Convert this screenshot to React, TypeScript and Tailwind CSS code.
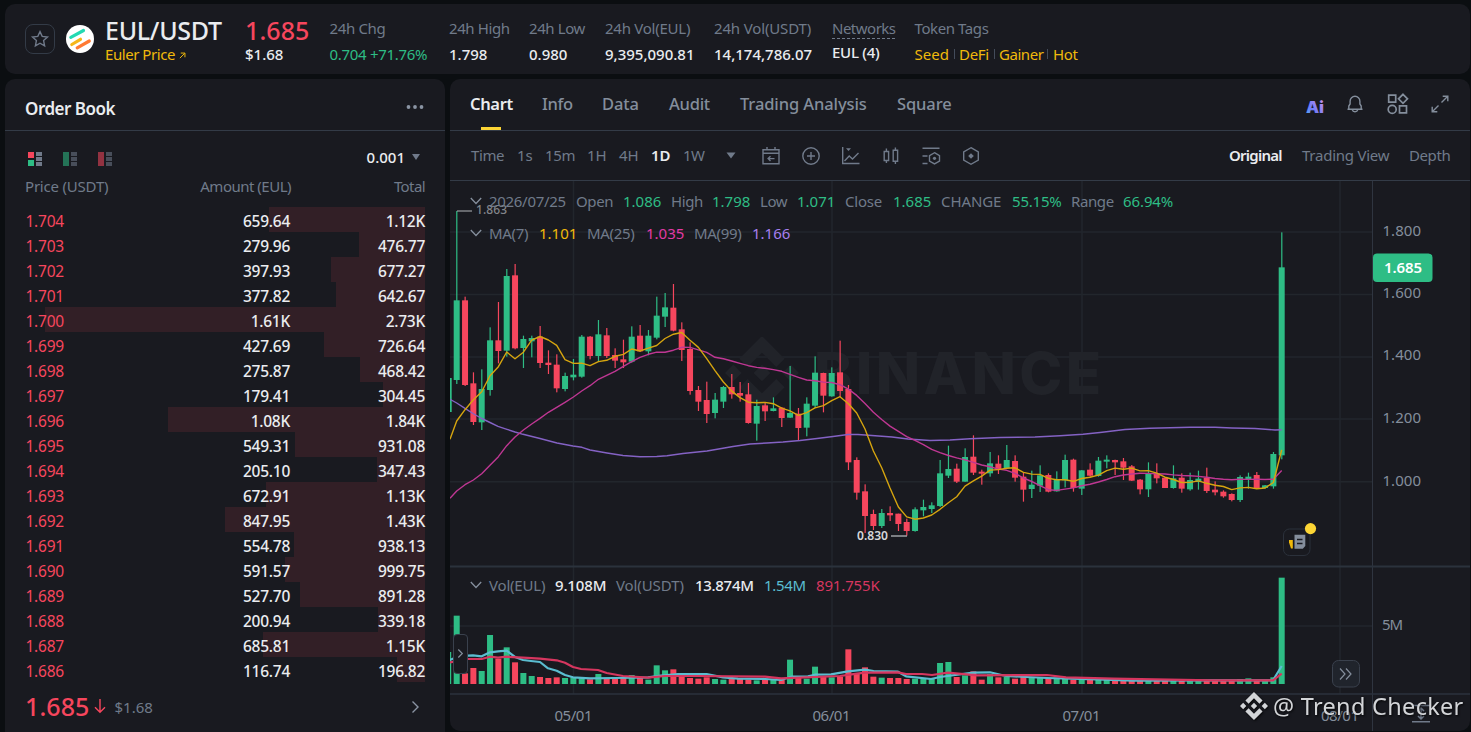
import type { ReactNode } from "react";
import { SiBinance } from "react-icons/si";

type Candle = [number, number, number, number, number];

const STEP = 25 / 3;
const FIRST_X = 456.7;
const GREEN = "#2ebd85";
const RED = "#f6465d";

/* Each candle: high, body top, body bottom, low, rising (1) or falling (0); thirds of a pixel. */
const GROUPS: { dy: number; rows: Candle[] }[] = [
  {
    dy: 190,
    rows: [
      [63, 331, 570, 582, 1], [320, 331, 585, 588, 0], [547, 580, 696, 705, 0], [538, 597, 697, 720, 1],
      [412, 451, 600, 617, 1], [336, 451, 483, 520, 0], [237, 258, 482, 500, 1], [222, 256, 475, 478, 0],
      [437, 447, 474, 534, 1], [437, 444, 454, 502, 1], [408, 440, 519, 534, 0], [481, 518, 525, 552, 0],
      [493, 524, 595, 607, 0], [548, 558, 597, 604, 1], [507, 554, 562, 571, 1], [435, 440, 560, 563, 1],
      [438, 440, 498, 508, 0], [390, 433, 498, 515, 1], [414, 436, 498, 504, 0], [475, 495, 512, 534, 0],
      [449, 508, 517, 534, 0], [409, 440, 515, 518, 1], [405, 437, 484, 486, 0], [420, 437, 484, 496, 1],
    ],
  },
  {
    dy: 270,
    rows: [
      [80, 137, 203, 208, 1], [69, 112, 140, 171, 1], [42, 113, 182, 184, 0], [157, 178, 240, 273, 0],
      [217, 237, 363, 374, 0], [348, 360, 395, 423, 0], [335, 390, 432, 459, 0], [369, 389, 429, 445, 1],
      [348, 351, 395, 414, 1], [312, 351, 373, 386, 0], [336, 369, 377, 395, 0], [339, 373, 459, 461, 0],
      [389, 408, 461, 512, 1], [397, 406, 424, 453, 0], [382, 415, 423, 424, 1], [411, 413, 444, 471, 0],
      [288, 429, 443, 444, 1], [414, 431, 474, 511, 0], [382, 401, 473, 499, 1], [259, 308, 407, 414, 1],
      [308, 309, 377, 427, 0], [292, 309, 379, 380, 1], [212, 307, 363, 381, 0], [345, 357, 577, 600, 0],
      [562, 570, 668, 689, 0],
    ],
  },
  {
    dy: 330,
    rows: [
      [463, 484, 558, 609, 0], [539, 552, 588, 600, 0], [537, 549, 588, 594, 1], [529, 549, 556, 573, 0],
      [551, 551, 582, 603, 0], [566, 576, 603, 617, 0], [532, 538, 603, 605, 1], [509, 531, 541, 559, 1],
      [517, 526, 537, 549, 1], [390, 430, 528, 531, 1], [347, 417, 437, 444, 1], [401, 416, 455, 459, 0],
      [355, 381, 455, 455, 1], [316, 380, 428, 435, 0], [419, 425, 431, 464, 0], [366, 400, 430, 440, 1],
      [376, 401, 420, 432, 0], [345, 390, 414, 416, 1], [376, 393, 443, 455, 0], [428, 440, 479, 515, 0],
      [422, 464, 477, 504, 1], [406, 436, 467, 486, 1], [430, 435, 485, 487, 0], [424, 449, 484, 485, 1],
      [374, 390, 451, 472, 1],
    ],
  },
  {
    dy: 220,
    rows: [
      [716, 719, 804, 815, 0], [750, 751, 806, 825, 1], [730, 749, 767, 770, 0], [711, 722, 768, 770, 1],
      [706, 719, 725, 745, 1], [719, 720, 727, 765, 0], [714, 724, 743, 780, 0], [735, 739, 782, 783, 0],
      [777, 779, 808, 823, 0], [727, 762, 808, 831, 1], [730, 760, 775, 790, 0], [772, 773, 804, 804, 0],
      [736, 775, 804, 806, 1], [760, 773, 806, 818, 0], [758, 780, 808, 812, 1], [752, 776, 786, 809, 1],
      [743, 773, 813, 819, 0], [784, 809, 817, 826, 0], [811, 815, 829, 833, 0], [820, 822, 840, 844, 0],
      [766, 771, 840, 846, 1], [758, 770, 777, 806, 1], [756, 765, 804, 806, 0], [795, 796, 804, 806, 1],
      [696, 702, 799, 806, 1], [37, 142, 706, 718, 1],
    ],
  },
];

const candles = GROUPS.flatMap(({ dy, rows }) =>
  rows.map(([h, t, b, l, up]) => ({ h: h / 3 + dy, t: t / 3 + dy, b: b / 3 + dy, l: l / 3 + dy, up: up === 1 })),
).map((c, i) => ({ ...c, x: FIRST_X + i * STEP }));

const closes = candles.map((c) => (c.up ? c.t : c.b));

function average(period: number) {
  const out: [number, number][] = [];
  for (let i = period - 1; i < closes.length; i++) {
    const slice = closes.slice(i - period + 1, i + 1);
    out.push([candles[i].x, slice.reduce((a, b) => a + b, 0) / period]);
  }
  return out;
}

const points = (list: [number, number][]) => list.map(([x, y]) => `${x.toFixed(1)},${y.toFixed(1)}`).join(" ");
const lead = (list: number[]): [number, number][] =>
  list.map((y, i) => [i === 0 ? 450 : FIRST_X + (i - 1) * STEP, y / 3 + 190]);

const ma7 = [...lead([748, 693, 659, 629, 605, 557, 530]), ...average(7)];
const ma25 = [
  ...lead([925, 903, 884, 870, 851, 826, 800, 767, 741, 720, 702, 685, 667, 652, 637, 621, 603, 587, 568, 556, 544, 529, 515, 502, 493]),
  ...average(25),
];
const ma99: [number, number][] = [
  [450, 399.3], [456.7, 403], [465, 408.3], [473, 413.5], [481.7, 418.5], [490, 422.5], [498, 426.3], [507, 429.3],
  [515, 432], [523, 434.3], [540, 438.5], [557, 443], [573, 446], [582, 447.3], [590, 450], [607, 453], [623, 455.5],
  [640, 456.8], [656.7, 456.5], [667, 455.7], [683, 453.5], [707, 451], [733, 446.5], [750, 444], [767, 443],
  [783, 442], [800, 440.5], [817, 438.5], [833, 436.5], [848, 434.5], [858, 434.5], [865, 435], [892, 437],
  [908, 439], [930, 440.5], [950, 440], [970, 438.7], [1000, 437.5], [1035, 437], [1060, 435.7], [1083, 434.3],
  [1100, 432.5], [1125, 429.5], [1150, 428.3], [1190, 427.3], [1215, 427.3], [1232, 428], [1255, 428.5],
  [1275, 430], [1281.7, 429.7],
];

/* Bar tops of the volume pane, thirds of a pixel from its upper edge. */
const volumes = [
  167, 340, 324, 333, 225, 296, 262, 307, 339, 348, 351, 354, 352, 354, 352, 355, 358, 342, 356, 355,
  354, 345, 354, 359, 316, 331, 328, 345, 354, 356, 352, 357, 359, 357, 357, 359, 361, 360, 360, 360,
  299, 350, 356, 320, 350, 352, 350, 268, 341, 322, 350, 353, 354, 354, 357, 356, 354, 354, 309, 306,
  351, 346, 334, 359, 342, 352, 350, 356, 351, 352, 354, 355, 357, 357, 359, 358, 360, 359, 360, 361,
  361, 361, 361, 360, 361, 361, 360, 361, 360, 360, 361, 361, 361, 361, 357, 355, 361, 360, 352, 53,
];
const volFast: [number, number][] = [
  [448, 302], [454, 295], [468, 287], [473, 286], [481.7, 289], [490, 277], [498, 274], [506.7, 272], [515, 291],
  [523, 300], [531, 303], [540, 306], [548, 325], [556.7, 332], [565, 345], [573, 352], [590, 355], [615, 354],
  [648, 352], [661, 347], [678, 342], [706.7, 342], [723, 352], [738, 356], [765, 357], [781, 360], [791, 350],
  [808, 349], [815, 344], [831, 343], [848, 334], [865, 329], [873.6, 333], [898, 335], [906, 349], [931, 357],
  [940, 351], [973, 338], [990, 337], [1006, 348], [1047, 354], [1105, 359], [1133, 362], [1211, 361], [1273, 361],
  [1281.7, 318],
];
const volSlow: [number, number][] = [
  [448, 308], [468, 297], [481.7, 297], [490, 290], [498, 293], [506.7, 290], [523, 293], [540, 296], [556.7, 301],
  [565, 308], [573, 321], [581, 327], [598, 330], [606.7, 339], [623, 348], [648, 353], [665, 348], [698, 348],
  [765, 350], [781, 355], [840, 348], [857, 341], [865, 338], [898, 337], [906, 342], [922, 342], [932, 345],
  [948, 338], [977, 346], [1047, 345], [1066, 352], [1113, 356], [1211, 361], [1273, 361], [1281.7, 341],
];
const volPoints = (list: [number, number][]) => points(list.map(([x, y]) => [x, y / 3 + 560]));

const book: [string, string, string, number][] = [
  ["1.704", "659.64", "1.12K", 156], ["1.703", "279.96", "476.77", 66], ["1.702", "397.93", "677.27", 94],
  ["1.701", "377.82", "642.67", 89], ["1.700", "1.61K", "2.73K", 380], ["1.699", "427.69", "726.64", 101],
  ["1.698", "275.87", "468.42", 65], ["1.697", "179.41", "304.45", 42], ["1.696", "1.08K", "1.84K", 257],
  ["1.695", "549.31", "931.08", 130], ["1.694", "205.10", "347.43", 48], ["1.693", "672.91", "1.13K", 159],
  ["1.692", "847.95", "1.43K", 200], ["1.691", "554.78", "938.13", 131], ["1.690", "591.57", "999.75", 140],
  ["1.689", "527.70", "891.28", 125], ["1.688", "200.94", "339.18", 47], ["1.687", "685.81", "1.15K", 162],
  ["1.686", "116.74", "196.82", 28],
];

function Glyph({ className, children }: { className: string; children: ReactNode }) {
  return (
    <svg viewBox="0 0 20 20" fill="none" stroke="currentColor" strokeWidth="1.4" className={className}>
      {children}
    </svg>
  );
}

function Stat({ label, value, className, tone }: { label: string; value: string; className: string; tone: string }) {
  return (
    <div className={`flex flex-col gap-1.5 ${className}`}>
      <span className="text-[#707a8a]">{label}</span>
      <span className={tone}>{value}</span>
    </div>
  );
}

function Header() {
  return (
    <header className="ml-[5px] mr-px flex h-[70px] rounded-[10px] bg-[#191a20] pl-5 pt-3.5 whitespace-nowrap">
      <div className="mt-1.5 flex size-[30px] items-center justify-center rounded-lg border border-[#333b47] text-[#707a8a]">
        <Glyph className="size-5">
          <path d="M10 2.6l2.2 4.8 5.3.6-3.9 3.6 1 5.2-4.6-2.6-4.6 2.6 1-5.2L2.500 8l5.300-.6z" />
        </Glyph>
      </div>
      <svg viewBox="0 0 28 28" className="ml-[11px] mt-[7px] size-7" strokeWidth="3.2" strokeLinecap="round">
        <circle cx="14" cy="14" r="14" fill="#fff" />
        <path d="M4.800 12.300L17.500 5.500" stroke="#23d9b2" />
        <path d="M5.800 19.500L14.500 14.300" stroke="#f5b61a" />
        <path d="M11.200 22.800L23.300 16" stroke="#ff7a33" />
      </svg>
      <div className="ml-[11px] flex w-[140px] flex-col">
        <h1 className="h-6 text-[25px] leading-6 font-medium tracking-[-0.3px]">EUL/USDT</h1>
        <div className="mt-0.5 flex items-center gap-1 text-[#f0b90b]">
          <span className="tracking-[-0.45px]">Euler Price</span>
          <svg viewBox="0 0 8 8" className="mt-0.5 size-[7px]" fill="none" stroke="currentColor" strokeWidth="1.1">
            <path d="M1 7L6.500 1.500M2 1.200h4.800V6" />
          </svg>
        </div>
      </div>
      <div className="flex w-[84.500px] flex-col">
        <span className="h-6 text-[25px] leading-6 font-medium tracking-[0.1px] text-[#f6465d]">1.685</span>
        <span className="mt-0.5 font-medium">$1.68</span>
      </div>
      <div className="flex">
        <Stat label="24h Chg" value="0.704 +71.76%" className="w-[119.500px] tracking-[-0.35px]" tone="text-[#2ebd85] tracking-[-0.3px]" />
        <Stat label="24h High" value="1.798" className="w-20 tracking-[-0.4px]" tone="font-medium tracking-normal" />
        <Stat label="24h Low" value="0.980" className="w-[76px] tracking-[-0.4px]" tone="font-medium tracking-normal" />
        <Stat label="24h Vol(EUL)" value="9,395,090.81" className="w-[109px] tracking-[-0.25px]" tone="font-medium tracking-normal" />
        <Stat label="24h Vol(USDT)" value="14,174,786.07" className="w-[118px] tracking-[-0.15px]" tone="font-medium tracking-normal" />
        <div className="w-[82.500px]">
          <span className="block h-[21px] w-[63px] border-b border-dashed border-[#707a8a] tracking-[-0.5px] text-[#707a8a]">
            Networks
          </span>
          <span className="mt-[3px] block font-medium tracking-[-0.25px]">EUL (4)</span>
        </div>
        <div className="flex flex-col gap-1.5">
          <span className="tracking-[-0.4px] text-[#707a8a]">Token Tags</span>
          <div className="flex items-center text-[#f0b90b]">
            <span className="w-[39.500px]">Seed</span>
            <i className="mr-1 h-2.5 w-px bg-[#434c5a]" />
            <span className="w-[35px] tracking-[-0.3px]">DeFi</span>
            <i className="mr-1 h-2.5 w-px bg-[#434c5a]" />
            <span className="w-[48px] tracking-[-0.45px]">Gainer</span>
            <i className="mr-[5px] h-2.5 w-px bg-[#434c5a]" />
            <span className="tracking-[-0.4px]">Hot</span>
          </div>
        </div>
      </div>
    </header>
  );
}

function ViewIcon({ top, bottom, dim }: { top: string; bottom: string; dim?: boolean }) {
  return (
    <svg viewBox="0 0 14 14" className="size-3.5" opacity={dim ? 0.55 : 1} shapeRendering="crispEdges">
      <rect x="0" y="0" width="6" height={dim ? 14 : 6} fill={top} />
      <rect x="0" y="8" width="6" height="6" fill={bottom} />
      <rect x="8" y="0" width="6" height="4" fill="#707a8a" />
      <rect x="8" y="5" width="6" height="4" fill="#707a8a" />
      <rect x="8" y="10" width="6" height="4" fill="#707a8a" />
    </svg>
  );
}

function OrderBook() {
  return (
    <section className="flex w-[440px] flex-col rounded-t-[10px] bg-[#191a20]">
      <div className="flex h-[52px] items-center justify-between border-b border-[#333b47] pt-1.5 pr-[21px] pl-5">
        <h2 className="translate-y-px text-[17px] font-semibold tracking-[-0.5px]">Order Book</h2>
        <svg viewBox="0 0 18 4" className="h-1 w-[18px] -translate-y-px" fill="#8a94a3">
          <circle cx="2.500" cy="2" r="1.900" />
          <circle cx="9" cy="2" r="1.900" />
          <circle cx="15.500" cy="2" r="1.900" />
        </svg>
      </div>
      <div className="mt-4 flex h-5 items-center pr-[25px] pl-[23px]">
        <div className="mt-1 flex gap-[21px]">
          <ViewIcon top={RED} bottom={GREEN} />
          <ViewIcon top={GREEN} bottom={GREEN} dim />
          <ViewIcon top={RED} bottom={RED} dim />
        </div>
        <span className="ml-auto font-medium">0.001</span>
        <svg viewBox="0 0 8 6" className="ml-[7px] h-1.5 w-2" fill="#707a8a"><path d="M0 0h8L4 6z" /></svg>
      </div>
      <div className="mx-5 mt-[9px] flex text-[#707a8a]">
        <span className="w-[134px] tracking-[-0.2px]">Price (USDT)</span>
        <span className="w-[132px] text-right tracking-[-0.5px]">Amount (EUL)</span>
        <span className="flex-1 text-right tracking-[-0.6px]">Total</span>
      </div>
      <ul className="mt-[11px] flex flex-col">
        {book.map(([price, amount, total, depth]) => (
          <li
            key={price}
            className="mx-5 flex h-[25px] items-center bg-right bg-no-repeat pt-0.5 text-[15.500px] font-medium tracking-[-0.25px]"
            style={{
              backgroundImage: "linear-gradient(#321f26, #321f26)",
              backgroundSize: `${depth}px 100%`,
            }}
          >
            <span className="w-[134px] pl-[0.500px] font-normal text-[#f6465d]">{price}</span>
            <span className="w-[131px] text-right">{amount}</span>
            <span className="flex-1 text-right">{total}</span>
          </li>
        ))}
      </ul>
      <div className="mt-2 flex h-8 items-center pr-[26px] pl-5">
        <span className="text-[25px] font-medium tracking-[0.1px] text-[#f6465d]">1.685</span>
        <svg viewBox="0 0 12 16" className="ml-1 h-4 w-3" fill="none" stroke="#f6465d" strokeWidth="1.4">
          <path d="M6 1v13M1 9.200l5 5 5-5" />
        </svg>
        <span className="ml-[9px] pt-0.5 text-[#707a8a]">$1.68</span>
        <svg viewBox="0 0 8 14" className="mt-0.5 ml-auto h-[14px] w-2" fill="none" stroke="#8a94a3" strokeWidth="1.4">
          <path d="M1.500 1.500L7 7l-5.500 5.500" />
        </svg>
      </div>
    </section>
  );
}

function Tabs() {
  return (
    <nav className="flex h-[52px] shrink-0 border-b border-[#333b47] pl-5 whitespace-nowrap">
      <div className="flex gap-[30px] pt-[13px] text-[16.500px] leading-6 font-medium tracking-[-0.1px] text-[#848e9c]">
        <span className="relative w-[42px] font-semibold tracking-[-0.35px] text-[#eaecef]">
          Chart
          <i className="absolute top-[35px] left-[11px] h-[3px] w-5 bg-[#fcd535]" />
        </span>
        <span className="w-[30px] tracking-[-0.4px]">Info</span>
        <span className="w-[37px]">Data</span>
        <span className="w-[41px] tracking-[-0.25px]">Audit</span>
        <span className="w-[127px]">Trading Analysis</span>
        <span>Square</span>
      </div>
      <div className="ml-auto flex items-center pr-5 text-[#848e9c]">
        <svg viewBox="0 0 20 20" className="mt-1 mr-5 size-5">
          <defs>
            <linearGradient id="ai" x1="0" y1="1" x2="1" y2="0">
              <stop offset="0" stopColor="#4fb8f0" />
              <stop offset="0.35" stopColor="#6f7bf7" />
              <stop offset="0.8" stopColor="#b58cf2" />
              <stop offset="1" stopColor="#f0a5c8" />
            </linearGradient>
          </defs>
          <text x="1" y="16" fontSize="16" fontWeight="900" fontFamily="Inter" textLength="18" lengthAdjust="spacingAndGlyphs" fill="url(#ai)">
            Ai
          </text>
        </svg>
        <Glyph className="-mt-0.5 mr-[22px] size-5">
          <path d="M2.500 15.200h15M3.800 15.200V12l1.300-2V7.200a4.900 4.900 0 0 1 9.800 0V10l1.300 2v3.200M7.200 15.600a2.900 2.900 0 0 0 5.600 0" />
        </Glyph>
        <svg viewBox="0 0 22 22" className="-mt-px mr-[21px] size-[22px]" fill="none" stroke="currentColor" strokeWidth="1.700">
          <path d="M1.700 2.200h7v7h-7zM12.500 12.900h7v7h-7zM16 1.300l4.500 4.500-4.500 4.500-4.500-4.500z" />
          <circle cx="5.200" cy="16.400" r="4" />
        </svg>
        <Glyph className="-mt-px size-5">
          <path d="M11.500 8.500L17.500 2.500M12.700 2.200h5.100v5.100M8.500 11.500L2.500 17.500M2.200 12.700v5.100h5.100" />
        </Glyph>
      </div>
    </nav>
  );
}

function Toolbar() {
  return (
    <div className="flex h-[50px] shrink-0 items-center border-b border-[#333b47] pr-5 pl-[21px] whitespace-nowrap text-[#707a8a]">
      <div className="flex -translate-y-px items-center">
        <span className="w-[46px] tracking-[-0.4px]">Time</span>
        <span className="w-[28px]">1s</span>
        <span className="w-[42px] tracking-[-0.3px]">15m</span>
        <span className="w-8">1H</span>
        <span className="w-8">4H</span>
        <span className="w-8 font-semibold text-[#eaecef]">1D</span>
        <span className="w-[43px] tracking-[-0.5px]">1W</span>
      </div>
      <svg viewBox="0 0 10 7" className="h-[7px] w-2.5" fill="currentColor"><path d="M0.500 0.500h9L5 6.500z" /></svg>
      <div className="ml-[25px] flex gap-5">
        <Glyph className="size-5">
          <path d="M2 3.700h16v14H2zM2 7.200h16M6 1v2.700M14 1v2.700M13.500 12.600h-6M9.500 10.200l-2.400 2.400L9.500 15" />
        </Glyph>
        <Glyph className="size-5">
          <circle cx="10" cy="10" r="8.200" />
          <path d="M10 6v8M6 10h8" />
        </Glyph>
        <Glyph className="size-5">
          <path d="M1.700 1v16.500H18.500M3.500 15l4.700-5 3.300 3 6-6" />
          <path d="M5 2.200h5L7.500 5z" fill="currentColor" stroke="none" />
        </Glyph>
        <Glyph className="size-5">
          <path d="M3.200 5.500h4.400v9H3.200zM12.200 4.200h4.400v11h-4.400zM5.400 2.500v3M5.400 14.500v2.500M14.400 1.500v2.700M14.400 15.200v2.700" />
        </Glyph>
        <Glyph className="size-5">
          <path d="M1.500 2.200h17M1.500 10h5M1.500 17.500h5M13.500 6.700l5 2.900v5.400l-5 2.900-5-2.900V9.600z" />
          <circle cx="13.500" cy="12.300" r="1.600" fill="currentColor" stroke="none" />
        </Glyph>
        <Glyph className="size-5">
          <path d="M10 1.700l7.300 4.200v8.200L10 18.300l-7.300-4.200V5.900z" />
          <path d="M10 7.200l2.800 2.800-2.800 2.800L7.200 10z" fill="currentColor" stroke="none" />
        </Glyph>
      </div>
      <div className="ml-auto flex -translate-y-px">
        <span className="w-[73px] font-semibold tracking-[-0.75px] text-[#eaecef]">Original</span>
        <span className="w-[107px] tracking-[-0.25px]">Trading View</span>
        <span className="w-[41px] tracking-[-0.4px]">Depth</span>
      </div>
    </div>
  );
}

function Chevron() {
  return (
    <svg viewBox="0 0 12 8" className="mr-[7px] h-2 w-3 shrink-0" fill="none" stroke="#848e9c" strokeWidth="1.300">
      <path d="M0.800 1L6 6.500 11.200 1" />
    </svg>
  );
}

function Legend({ className, items }: { className: string; items: [string, string][] }) {
  return (
    <div className={`absolute left-5 flex h-5 items-center whitespace-nowrap text-[#707a8a] ${className}`}>
      <Chevron />
      {items.map(([text, style]) => (
        <span key={text} className={style}>{text}</span>
      ))}
    </div>
  );
}

function Plot() {
  return (
    <svg viewBox="450 181 1020 550" className="block h-[550px] w-full" fontFamily="Noto Sans, sans-serif">
      <g stroke="#22262c" strokeWidth="1.500">
        {[232, 294.5, 357, 419, 481.700, 626].map((y) => <path key={y} d={`M450 ${y}H1372`} />)}
        {[573.500, 832, 1082, 1340].map((x) => <path key={x} d={`M${x} 181V694`} />)}
      </g>
      <g fill="#212329">
        <SiBinance x={725} y={336} fill="#212329" className="size-[74px]" />
        <text x="814" y="394" fontSize="58" fontWeight="800" fontFamily="Inter" textLength="287">BINANCE</text>
      </g>
      <path d="M1372.500 181V731" stroke="#2f3540" />
      <path d="M450 566.500H1470" stroke="#2b323c" strokeWidth="2" />
      <path d="M450 694H1470" stroke="#2b323c" strokeWidth="1.500" />

      <rect x="450" y="378" width="1.700" height="34" fill={GREEN} />
      {candles.map((c) => (
        <g key={c.x} fill={c.up ? GREEN : RED}>
          <rect x={c.x - 0.500} y={c.h} width="1.200" height={c.l - c.h} />
          <rect x={c.x - 3} y={c.t} width="6" height={Math.max(1, c.b - c.t)} />
        </g>
      ))}
      <g fill="none" strokeWidth="1.400" strokeLinejoin="round">
        <polyline points={points(ma99)} stroke="#8462c4" />
        <polyline points={points(ma25)} stroke="#bf3793" />
        <polyline points={points(ma7)} stroke="#d6a50f" />
      </g>

      <rect x="450" y="652" width="1.200" height="32" fill={GREEN} />
      {candles.map((c, i) => (
        <rect key={c.x} x={c.x - 3} y={volumes[i] / 3 + 560} width="6" height={124 - volumes[i] / 3} fill={c.up ? GREEN : RED} />
      ))}
      <g fill="none" strokeWidth="2.200" strokeLinejoin="round">
        <polyline points={volPoints(volFast)} stroke="#5bbdd0" />
        <polyline points={volPoints(volSlow)} stroke="#d6365f" />
      </g>

      <path d="M457 211H472" stroke="#b4b6ba" />
      <text x="476" y="214" fontSize="12" fontWeight="500" fill="#84868b" textLength="31">1.863</text>
      <path d="M891 536H907" stroke="#b4b6ba" strokeWidth="1.300" />
      <text x="857" y="540" fontSize="13" fontWeight="600" fill="#d5d7da" textLength="31" lengthAdjust="spacingAndGlyphs">0.830</text>

      <g fill="#848e9c" fontSize="15">
        <text x="1382.500" y="236" textLength="38.500">1.800</text>
        <text x="1382.500" y="298" textLength="38.500">1.600</text>
        <text x="1382.500" y="360" textLength="38.500">1.400</text>
        <text x="1382.500" y="423" textLength="38.500">1.200</text>
        <text x="1382.500" y="485.500" textLength="38.500">1.000</text>
        <text x="1382" y="630" textLength="21">5M</text>
        <g textAnchor="middle">
          <text x="573.500" y="720.500" textLength="38">05/01</text>
          <text x="831.500" y="720.500" textLength="38">06/01</text>
          <text x="1081.500" y="720.500" textLength="38">07/01</text>
          <text x="1340" y="720.500" textLength="38">08/01</text>
        </g>
      </g>
      <rect x="1373" y="253.500" width="59.500" height="28.500" rx="4" fill={GREEN} />
      <text x="1384" y="273" fontSize="15" fontWeight="600" fill="#fff" textLength="38">1.685</text>

      <rect x="453.500" y="634.500" width="14" height="39" rx="3.500" fill="#191a20" stroke="#3a414d" />
      <path d="M458.300 649.500l4 4-4 4" fill="none" stroke="#848e9c" strokeWidth="1.200" />
      <rect x="1332.500" y="660.500" width="27" height="26.500" rx="6" fill="#20242c" stroke="#3a414d" />
      <path d="M1340 668.500l5 5.500-5 5.500M1346 668.500l5 5.500-5 5.500" fill="none" stroke="#848e9c" strokeWidth="1.200" />

      <rect x="1283.500" y="529" width="26.500" height="26.500" rx="6" fill="#191a20" stroke="#2b313b" />
      <path d="M1289 540h3.800v8.500h-1.800L1289 542.500z" fill="#f0b90b" />
      <path d="M1294.500 534.800h10.800v11.200l-2.500 2.800h-8.300z" fill="#848e9c" />
      <path d="M1297 539.500h5.500M1297 543.500h5.500" stroke="#191a20" strokeWidth="1.700" />
      <circle cx="1310.500" cy="528.600" r="5.600" fill="#fcd535" />

      <path d="M1412 705.500h18M1412 721.700h18M1421 708v11M1418 711l3-3 3 3M1418 716l3 3 3-3" fill="none" stroke="#707a8a" strokeWidth="1.500" />
    </svg>
  );
}

function ChartPanel() {
  return (
    <section className="mr-px mb-px flex flex-1 flex-col overflow-hidden rounded-[10px] bg-[#191a20]">
      <Tabs />
      <Toolbar />
      <div className="relative">
        <Plot />
        <Legend
          className="top-[10px]"
          items={[
            ["2026/07/25", "w-[87px] tracking-[-0.3px]"],
            ["Open", "w-[47px] tracking-[-0.4px]"],
            ["1.086", "w-[48px] text-[#2ebd85]"],
            ["High", "w-[41px] tracking-[-0.4px]"],
            ["1.798", "w-[48px] text-[#2ebd85]"],
            ["Low", "w-[37px] tracking-[-0.4px]"],
            ["1.071", "w-[48px] text-[#2ebd85]"],
            ["Close", "w-[48px] tracking-[-0.2px]"],
            ["1.685", "w-[48px] text-[#2ebd85]"],
            ["CHANGE", "w-[71px] tracking-[-0.1px]"],
            ["55.15%", "w-[59px] text-[#2ebd85] tracking-[-0.2px]"],
            ["Range", "w-[52px] tracking-[-0.4px]"],
            ["66.94%", "text-[#2ebd85] tracking-[-0.1px]"],
          ]}
        />
        <Legend
          className="top-[42px]"
          items={[
            ["MA(7)", "w-[50px] tracking-[-0.3px]"],
            ["1.101", "w-[48px] text-[#f0b90b]"],
            ["MA(25)", "w-[59px] tracking-[-0.3px]"],
            ["1.035", "w-[48px] text-[#e23aa5]"],
            ["MA(99)", "w-[58px] tracking-[-0.3px]"],
            ["1.166", "text-[#a67fef]"],
          ]}
        />
        <Legend
          className="top-[394px]"
          items={[
            ["Vol(EUL)", "w-[66px] tracking-[-0.2px]"],
            ["9.108M", "w-[61px] font-medium text-[#eaecef] tracking-[-0.15px]"],
            ["Vol(USDT)", "w-[79px] tracking-[-0.1px]"],
            ["13.874M", "w-[69px] font-medium text-[#eaecef] tracking-[-0.3px]"],
            ["1.54M", "w-[52px] text-[#5bbdd0] tracking-[-0.3px]"],
            ["891.755K", "text-[#d6365f] tracking-[-0.15px]"],
          ]}
        />
        <div className="absolute top-[509px] left-[790px] flex items-center whitespace-nowrap text-[#d3d5d8] drop-shadow-[1px_1px_1px_rgba(0,0,0,0.8)]">
          <SiBinance className="size-7" />
          <span className="ml-[5px] text-[23.500px] leading-8 tracking-[0.3px]">@ Trend Checker</span>
        </div>
      </div>
    </section>
  );
}

export default function App() {
  return (
    <main className="flex h-[732px] w-[1471px] flex-col gap-[5px] overflow-hidden bg-[#0b0e11] pt-1 font-['Noto_Sans',sans-serif] text-[15px] leading-5 text-[#eaecef]">
      <Header />
      <div className="flex min-h-0 flex-1 gap-[5px] pl-[5px]">
        <OrderBook />
        <ChartPanel />
      </div>
    </main>
  );
}
